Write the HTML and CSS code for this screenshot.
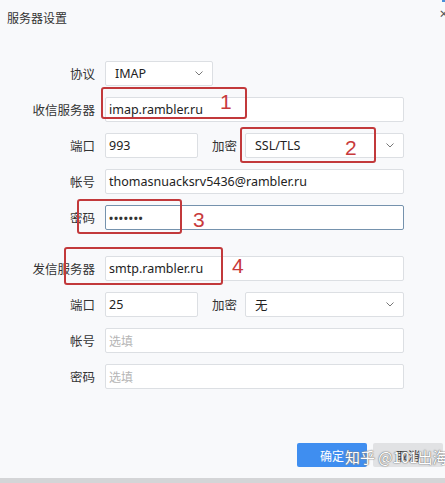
FILE: index.html
```
<!DOCTYPE html>
<html lang="zh">
<head>
<meta charset="utf-8">
<link rel="stylesheet" href="styles.css">
</head>
<body>
<div class="dialog">
  <div class="header">
    <span class="title">服务器设置</span>
    <span class="close">×</span>
  </div>
  <div class="form">
    <div class="row r-proto">
      <label class="lbl">协议</label>
      <div class="select sel-proto"><span>IMAP</span><svg class="chev" width="8" height="5" viewBox="0 0 8 5"><polyline points="0.5,0.5 4,4 7.5,0.5" fill="none" stroke="#777" stroke-width="1"/></svg></div>
    </div>
    <div class="row">
      <label class="lbl">收信服务器</label>
      <div class="input wide">imap.rambler.ru</div>
    </div>
    <div class="row">
      <label class="lbl">端口</label>
      <div class="input port">993</div>
      <label class="lbl2">加密</label>
      <div class="select enc"><span>SSL/TLS</span><svg class="chev" width="8" height="5" viewBox="0 0 8 5"><polyline points="0.5,0.5 4,4 7.5,0.5" fill="none" stroke="#777" stroke-width="1"/></svg></div>
    </div>
    <div class="row">
      <label class="lbl">帐号</label>
      <div class="input wide">thomasnuacksrv5436@rambler.ru</div>
    </div>
    <div class="row">
      <label class="lbl">密码</label>
      <div class="input wide focus dots">•••••••</div>
    </div>
    <div class="row sec">
      <label class="lbl">发信服务器</label>
      <div class="input wide">smtp.rambler.ru</div>
    </div>
    <div class="row">
      <label class="lbl">端口</label>
      <div class="input port">25</div>
      <label class="lbl2">加密</label>
      <div class="select enc"><span>无</span><svg class="chev" width="8" height="5" viewBox="0 0 8 5"><polyline points="0.5,0.5 4,4 7.5,0.5" fill="none" stroke="#777" stroke-width="1"/></svg></div>
    </div>
    <div class="row">
      <label class="lbl">帐号</label>
      <div class="input wide ph">选填</div>
    </div>
    <div class="row">
      <label class="lbl">密码</label>
      <div class="input wide ph">选填</div>
    </div>
  </div>
  <div class="footer">
    <button class="btn ok">确定</button>
    <button class="btn cancel">取消</button>
  </div>
  <div class="bottombar"></div>

  <div class="mark m1"></div><span class="num n1">1</span>
  <div class="mark m2"></div><span class="num n2">2</span>
  <div class="mark m3"></div><span class="num n3">3</span>
  <div class="mark m4"></div><span class="num n4">4</span>
  <span class="watermark">知乎 @101出海</span>
  <span class="corner"></span>
</div>
</body>
</html>
```
FILE: styles.css
```
html, body {
  margin: 0;
  padding: 0;
}
body {
  background: #f8f9fb;
  font-family: "Noto Sans", "Noto Sans CJK SC", sans-serif;
  color: #333;
  font-size: 13px;
}
.dialog {
  position: relative;
  width: 445px;
  height: 483px;
  overflow: hidden;
}
.header {
  height: 34px;
  display: flex;
  align-items: center;
  justify-content: space-between;
  padding: 0 0 0 7px;
}
.title {
  font-family: "Noto Sans CJK SC", sans-serif;
  font-size: 12px;
  color: #333;
}
.close {
  font-size: 15px;
  color: #555;
  margin-right: -3px;
  margin-top: -8px;
}
.form {
  padding-top: 27px;
}
.row {
  display: flex;
  align-items: center;
  height: 25px;
  margin-bottom: 11px;
}
.row.sec {
  margin-top: 26px;
}
.lbl {
  width: 105px;
  text-align: right;
  padding-right: 10px;
  box-sizing: border-box;
  font-family: "Noto Sans CJK SC", sans-serif;
  font-size: 12.5px;
  color: #333;
}
.lbl2 {
  width: 47px;
  padding-left: 14px;
  box-sizing: border-box;
  font-family: "Noto Sans CJK SC", sans-serif;
  font-size: 12.5px;
  color: #333;
}
.input, .select {
  height: 25px;
  box-sizing: border-box;
  border: 1px solid #dcdfe3;
  background: #fff;
  border-radius: 2px;
  display: flex;
  align-items: center;
  padding-left: 3px;
  font-size: 12.5px;
  color: #222;
}
.wide { width: 299px; }
.port { width: 93px; }
.sel-proto { width: 108px; padding-left: 9px; justify-content: space-between; padding-right: 9px; }
.enc { width: 159px; padding-left: 9px; justify-content: space-between; padding-right: 9px; }
.focus { border-color: #7592ad; }
.dots { font-size: 11px; letter-spacing: 0.8px; font-weight: bold; color: #333; }
.ph { color: #b5b5b5; font-family: "Noto Sans CJK SC", sans-serif; font-size: 12px; }
.chev { flex: none; }
.footer {
  position: absolute;
  left: 0;
  right: 0;
  top: 443px;
  display: flex;
  justify-content: flex-end;
  gap: 6px;
  padding-right: 2px;
}
.btn {
  height: 24px;
  border: none;
  border-radius: 2px;
  font-family: "Noto Sans CJK SC", sans-serif;
  font-size: 12px;
  padding: 0;
}
.ok { width: 70px; background: #3f8ef0; color: #fff; }
.cancel { width: 70px; background: #e1e2e4; color: #333; }
.bottombar {
  position: absolute;
  left: 0; right: 0; bottom: 0;
  height: 5px;
  background: #d4d5d7;
}
.mark {
  position: absolute;
  border: 2.5px solid #c2393b;
  border-radius: 3px;
  box-sizing: border-box;
}
.m1 { left: 101px; top: 87px; width: 146px; height: 32px; }
.m2 { left: 240px; top: 127px; width: 136px; height: 36px; }
.m3 { left: 77px; top: 199px; width: 105px; height: 35px; }
.m4 { left: 64px; top: 247px; width: 159px; height: 38px; }
.num {
  position: absolute;
  color: #c83a3c;
  font-family: "Liberation Sans", sans-serif;
  font-size: 21px;
  line-height: 1;
}
.n1 { left: 220px; top: 91px; }
.n2 { left: 345px; top: 137px; }
.n3 { left: 193px; top: 209px; }
.n4 { left: 232px; top: 255px; }
.watermark {
  position: absolute;
  left: 345px;
  top: 446px;
  font-family: "Noto Sans CJK SC", sans-serif;
  font-size: 15px;
  color: #fff;
  text-shadow: 0 0 1px #777, 0 0 1px #777, 0 0 2px #999;
  white-space: nowrap;
}
.corner {
  position: absolute;
  right: 0;
  top: 0;
  width: 3px;
  height: 2px;
  background: #4a8fd8;
}
```
